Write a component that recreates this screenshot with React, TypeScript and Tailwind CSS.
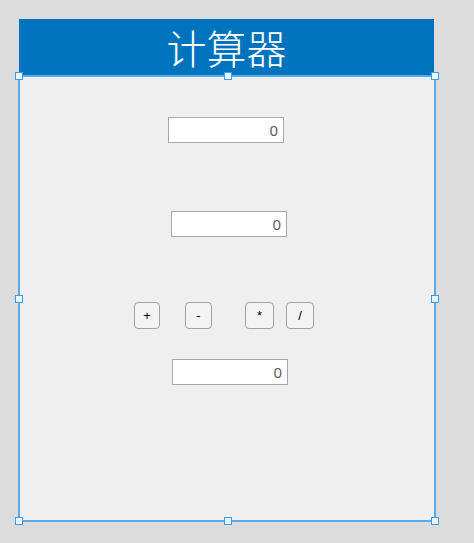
import React from 'react';

const NumberBox: React.FC<{ className?: string }> = ({ className }) => (
  <div
    className={`w-[116px] h-[26px] bg-white border border-[#a8a8a8] flex items-center justify-end pr-[5px] text-[15px] text-[#555] font-['Open_Sans','Liberation_Sans',sans-serif] ${className ?? ''}`}
  >
    0
  </div>
);

const OpButton: React.FC<{ label: string; className?: string }> = ({ label, className }) => (
  <button
    className={`h-[27px] rounded-[4px] border border-[#a3a3a3] bg-[#f3f3f3] text-[13px] text-black flex items-center justify-center font-['Liberation_Sans',sans-serif] ${className ?? ''}`}
  >
    {label}
  </button>
);

const Handle: React.FC<{ className: string }> = ({ className }) => (
  <span className={`absolute w-[8px] h-[8px] bg-[#eaf5ff] border border-[#3b9be3] ${className}`} />
);

export default function App() {
  return (
    <div className="w-[474px] h-[543px] bg-[#dcdcdc] pt-[19px] pl-[18px] overflow-hidden">
      <div className="ml-px w-[415px] h-[56px] bg-[#0073be] flex items-center justify-center text-white text-[40px] leading-none font-['Noto_Sans_CJK_SC',serif] font-light">
        计算器
      </div>
      <div className="relative w-[418px] h-[447px] border-2 border-[#5aaae8] bg-[#efefef] flex flex-col items-start">
        <NumberBox className="mt-[40px] ml-[148px]" />
        <NumberBox className="mt-[68px] ml-[151px]" />
        <div className="mt-[65px] ml-[114px] flex">
          <OpButton label="+" className="w-[26px]" />
          <OpButton label="-" className="w-[27px] ml-[25px]" />
          <OpButton label="*" className="w-[29px] ml-[33px]" />
          <OpButton label="/" className="w-[28px] ml-[12px]" />
        </div>
        <NumberBox className="mt-[30px] ml-[152px] h-[25px]" />

        <Handle className="-left-[5px] -top-[5px]" />
        <Handle className="left-[204px] -top-[5px]" />
        <Handle className="-right-[5px] -top-[5px]" />
        <Handle className="-left-[5px] top-[218px]" />
        <Handle className="-right-[5px] top-[218px]" />
        <Handle className="-left-[5px] -bottom-[5px]" />
        <Handle className="left-[204px] -bottom-[5px]" />
        <Handle className="-right-[5px] -bottom-[5px]" />
      </div>
    </div>
  );
}
